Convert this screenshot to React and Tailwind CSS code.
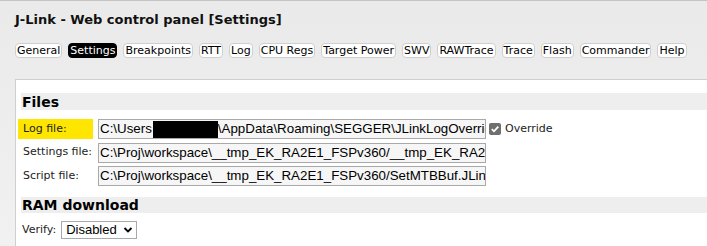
import React from 'react';

const tabs = ['General', 'Settings', 'Breakpoints', 'RTT', 'Log', 'CPU Regs', 'Target Power', 'SWV', 'RAWTrace', 'Trace', 'Flash', 'Commander', 'Help'];

function Field({ children }) {
  return (
    <div className="w-[388px] shrink-0 h-[20px] border border-[#a9a9a9] bg-[#f6f6f6] pl-[1px] flex items-center overflow-hidden whitespace-nowrap text-[13.33px] text-black leading-none" style={{ fontFamily: '"Liberation Sans", Arial, sans-serif' }}>
      {children}
    </div>
  );
}

function Row({ label, highlight, children }) {
  return (
    <div className="flex items-center h-[20px]">
      <div className={`w-[75px] shrink-0 h-[20px] pl-[5px] flex items-center text-[11px] text-[#222] ${highlight ? 'bg-[#ffe600]' : ''}`}>
        {label}
      </div>
      <div className="ml-[5px] flex items-center">{children}</div>
    </div>
  );
}

export default function App() {
  return (
    <div className="w-[707px] h-[246px] overflow-hidden border-t border-[#c4c4c4] bg-gradient-to-b from-[#eaeaea] to-[#f1f1f1]" style={{ fontFamily: '"DejaVu Sans", Verdana, sans-serif' }}>
      <div className="pl-[15px] pt-[11px]">
        <h1 className="text-[13px] font-bold text-[#111] leading-[16px]">J-Link - Web control panel [Settings]</h1>

        <div className="flex gap-[6px] mt-[15px]">
          {tabs.map((t) => (
            <span
              key={t}
              className={
                t === 'Settings'
                  ? 'shrink-0 h-[15px] px-[1px] rounded-[4px] border border-black bg-black text-white text-[11px] leading-[13px]'
                  : 'shrink-0 h-[15px] px-[1px] rounded-[4px] border border-[#cfcfcf] bg-white text-black text-[11px] leading-[13px]'
              }
            >
              {t}
            </span>
          ))}
        </div>

        <div className="mt-[21px] bg-white border-l border-t border-[#cfcfcf] h-[200px] pl-[2px] pt-[13px]">
          <div className="ml-[3px] h-[17px] bg-[#eeeeee] flex items-center">
            <h2 className="text-[14px] font-bold text-black leading-none pl-[1px]">Files</h2>
          </div>

          <div className="mt-[9px] flex flex-col gap-[3.5px]">
            <Row label="Log file:" highlight>
              <Field>
                <span className="shrink-0">C:\Users</span>
                <span className="shrink-0 inline-block w-[65px] h-[17px] bg-black ml-[1px]" />
                <span className="shrink-0">\AppData\Roaming\SEGGER\JLinkLogOverride.txt</span>
              </Field>
              <span className="shrink-0 ml-[3px] w-[12px] h-[12px] rounded-[2px] bg-[#6f6f6f] flex items-center justify-center">
                <svg width="10" height="10" viewBox="0 0 10 10">
                  <path d="M1.8 5.2 L4 7.3 L8.3 2.6" fill="none" stroke="white" strokeWidth="1.8" />
                </svg>
              </span>
              <span className="ml-[4px] text-[11px] text-[#222]">Override</span>
            </Row>
            <Row label="Settings file:">
              <Field>C:\Proj\workspace\__tmp_EK_RA2E1_FSPv360/__tmp_EK_RA2E1_FSPv360.jlink</Field>
            </Row>
            <Row label="Script file:">
              <Field>C:\Proj\workspace\__tmp_EK_RA2E1_FSPv360/SetMTBBuf.JLinkScript</Field>
            </Row>
          </div>

          <div className="mt-[11px] ml-[3px] h-[16px] bg-[#eeeeee] flex items-center">
            <h2 className="text-[14px] font-bold text-black leading-none pl-[1px]">RAM download</h2>
          </div>

          <div className="mt-[8px] flex items-center pl-[4px]">
            <span className="text-[11px] text-[#222]">Verify:</span>
            <div className="ml-[5px] w-[76px] h-[18px] border border-[#a9a9a9] bg-white flex items-center justify-between pl-[4px] pr-[3px] text-[13px] text-black" style={{ fontFamily: '"Liberation Sans", Arial, sans-serif' }}>
              <span>Disabled</span>
              <svg width="10" height="10" viewBox="0 0 10 10">
                <path d="M1.5 3 L5 6.5 L8.5 3" fill="none" stroke="black" strokeWidth="1.8" />
              </svg>
            </div>
          </div>
        </div>
      </div>
    </div>
  );
}
